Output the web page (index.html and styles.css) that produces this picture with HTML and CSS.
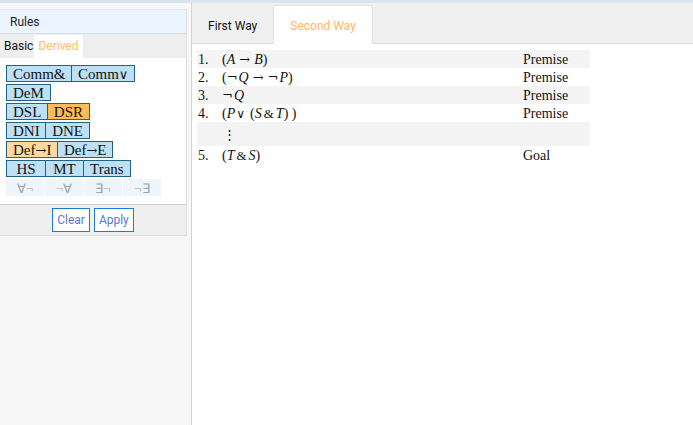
FILE: index.html
```html
<!DOCTYPE html>
<html>
<head>
<meta charset="utf-8">
<link rel="stylesheet" href="styles.css">
</head>
<body>
<div class="topbar"></div>
<div class="main">
  <aside class="sidebar">
    <div class="panel">
      <div class="panel-head">Rules</div>
      <div class="ptabs">
        <span class="ptab">Basic</span>
        <span class="ptab active">Derived</span>
      </div>
      <div class="rules">
        <div class="rrow"><span class="rb">Comm&amp;</span><span class="rb">Comm<span class="s">∨</span></span></div>
        <div class="rrow"><span class="rb">DeM</span></div>
        <div class="rrow"><span class="rb">DSL</span><span class="rb sel">DSR</span></div>
        <div class="rrow"><span class="rb">DNI</span><span class="rb">DNE</span></div>
        <div class="rrow"><span class="rb half">Def<span class="s">→</span>I</span><span class="rb">Def<span class="s">→</span>E</span></div>
        <div class="rrow"><span class="rb w39">HS</span><span class="rb w39">MT</span><span class="rb">Trans</span></div>
        <div class="rrow"><span class="rb dis">∀¬</span><span class="rb dis">¬∀</span><span class="rb dis">∃¬</span><span class="rb dis">¬∃</span></div>
      </div>
      <div class="pfoot">
        <button class="btn">Clear</button>
        <button class="btn">Apply</button>
      </div>
    </div>
  </aside>
  <section class="content">
    <div class="tabs">
      <span class="tab">First Way</span>
      <span class="tab active">Second Way</span>
    </div>
    <table class="proof">
      <tr class="odd"><td class="n">1.</td><td class="f">(<i>A</i><span class="s arr">→</span><i>B</i>)</td><td class="j">Premise</td></tr>
      <tr><td class="n">2.</td><td class="f">(<span class="s neg">¬</span><i>Q</i><span class="s arr">→</span><span class="s neg">¬</span><i>P</i>)</td><td class="j">Premise</td></tr>
      <tr class="odd"><td class="n">3.</td><td class="f"><span class="s neg">¬</span><i>Q</i></td><td class="j">Premise</td></tr>
      <tr><td class="n">4.</td><td class="f">(<i>P</i><span class="s or">∨</span>(<i>S</i><span class="amp">&amp;</span><i>T</i>) )</td><td class="j">Premise</td></tr>
      <tr class="odd dots"><td class="n"></td><td class="f"><span class="vd">⋮</span></td><td class="j"></td></tr>
      <tr><td class="n">5.</td><td class="f">(<i>T</i><span class="amp">&amp;</span><i>S</i>)</td><td class="j">Goal</td></tr>
    </table>
  </section>
</div>
</body>
</html>
```
FILE: styles.css
```css
html, body {
  margin: 0;
  padding: 0;
  height: 100%;
  background: #fff;
  font-family: Roboto, "Liberation Sans", sans-serif;
}
.topbar {
  height: 3px;
  background: #d9e4ee;
}
.main {
  display: flex;
  height: calc(100% - 3px);
}
.sidebar {
  width: 192px;
  background: #f7f7f7;
  border-right: 1px solid #d4d4d4;
  padding-top: 6px;
  box-sizing: border-box;
}
.panel {
  width: 187px;
  border-right: 1px solid #dcdcdc;
  border-bottom: 1px solid #dcdcdc;
  box-sizing: border-box;
}
.panel-head {
  height: 25px;
  box-sizing: border-box;
  background: #eaf5ff;
  border-top: 1px solid #dde6ee;
  border-bottom: 1px solid #d6dee6;
  font-size: 12px;
  color: #222;
  padding: 5px 0 0 10px;
}
.ptabs {
  display: flex;
  background: #eeeeee;
  height: 24px;
  padding-left: 3px;
  align-items: flex-end;
}
.ptab {
  font-size: 12px;
  color: #111;
  padding: 0 1px 5px 1px;
  height: 23px;
  box-sizing: border-box;
  display: flex;
  align-items: flex-end;
}
.ptab.active {
  background: #fff;
  color: #ffba6b;
  padding: 0 4px 5px 4px;
  border-radius: 2px 2px 0 0;
}
.rules {
  background: #fff;
  padding: 7px 0 8px 6px;
  height: 146px;
  box-sizing: border-box;
}
.rrow {
  display: flex;
  height: 19px;
}
.rb {
  font-family: "Liberation Serif", serif;
  font-size: 15px;
  line-height: 15px;
  height: 17px;
  box-sizing: border-box;
  background: #bde0f4;
  border: 1.5px solid #1f6486;
  padding: 1px 6px 0 6px;
  color: #111;
  margin-right: -1.5px;
  white-space: nowrap;
}
.rb .s {
  font-family: "DejaVu Serif", serif;
  font-size: 13px;
}
.rb.sel { background: #ffbb55; }
.rb.half { background: #ffd9a0; }
.rb.w39 { width: 40px; text-align: center; padding: 1px 0 0 0; }
.rb.dis {
  width: 39px;
  background: #eef6fc;
  border: none;
  border-right: 1px solid #fff;
  color: #9aa2aa;
  text-align: center;
  padding: 2px 0 0 0;
  margin-right: 0;
  font-size: 13px;
}
.pfoot {
  height: 30px;
  background: #efefef;
  border-top: 1px solid #cfcfcf;
  display: flex;
  justify-content: center;
  align-items: center;
  gap: 4px;
}
.btn {
  height: 24px;
  background: #fff;
  border: 1.5px solid #1b7bd6;
  color: #5a7ad8;
  font-family: Roboto, "Liberation Sans", sans-serif;
  font-size: 12px;
  padding: 0 4px;
  margin: 0;
  border-radius: 0;
}
.content {
  flex: 1;
}
.tabs {
  display: flex;
  height: 40px;
  background: #f0f0f0;
  border-bottom: 1px solid #dcdcdc;
  align-items: flex-end;
}
.tab {
  font-size: 12px;
  color: #111;
  height: 38px;
  box-sizing: border-box;
  padding: 14px 16px 0 16px;
}
.tab.active {
  background: #fff;
  color: #ffb766;
  border: 1px solid #e2e2e2;
  border-bottom: none;
  border-radius: 3px 3px 0 0;
  height: 39px;
  margin-bottom: -1px;
  padding-top: 13px;
}
.proof {
  margin: 6px 0 0 5px;
  border-collapse: collapse;
  width: 393px;
  font-family: "Liberation Serif", serif;
  font-size: 14px;
  line-height: 16px;
  color: #111;
}
.proof td {
  height: 18px;
  padding: 2px 0 0 0;
  box-sizing: border-box;
  vertical-align: middle;
  white-space: nowrap;
}
.proof .s {
  font-family: "DejaVu Serif", serif;
  font-size: 13px;
  line-height: 14px;
}
.proof .arr { margin: 0 4px; }
.proof .neg { margin-right: 1px; }
.proof .or { margin: 0 5px 0 1px; font-size: 12px; }
.proof .amp { margin: 0 2px; font-size: 13px; }
.proof tr.odd { background: #f4f4f4; }
.proof tr.dots td { height: 24px; }
.proof td.n { width: 24px; padding-left: 1px; }
.proof td.f { width: 300px; padding-left: 1px; }
.proof td.j { padding-left: 2px; }
.proof i { font-style: italic; }
.vd { font-size: 13px; display: inline-block; padding-left: 1px; }
```
